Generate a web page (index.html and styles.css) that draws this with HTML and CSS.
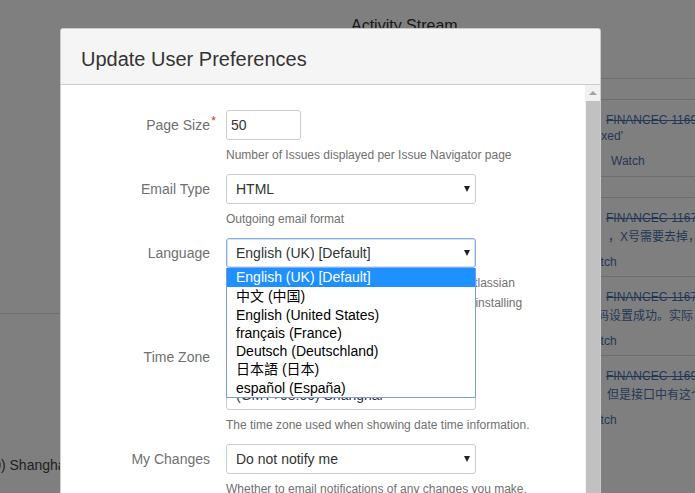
FILE: index.html
```html
<!DOCTYPE html>
<html lang="en">
<head>
<meta charset="utf-8">
<title>Update User Preferences</title>
<link rel="stylesheet" href="styles.css">
</head>
<body>
<div class="page">
  <div class="page-left">
    <div class="left-top"></div>
    <div class="left-tz">(GMT+08:00) Shanghai</div>
  </div>
  <div class="page-right">
    <h3 class="stream-title">Activity Stream</h3>
    <div class="band"></div>
    <div class="act act-first">
      <div class="act-key"><s>FINANCEC-1169</s></div>
      <div class="act-text off-fixed">'Fixed'</div>
      <div class="act-watch off-first">Watch</div>
    </div>
    <div class="band"></div>
    <div class="act">
      <div class="act-key"><s>FINANCEC-1167</s></div>
      <div class="act-text off-2">，X号需要去掉，</div>
      <div class="act-watch off-watch">Watch</div>
    </div>
    <div class="act">
      <div class="act-key"><s>FINANCEC-1167</s></div>
      <div class="act-text off-3">密码设置成功。实际</div>
      <div class="act-watch off-watch">Watch</div>
    </div>
    <div class="act">
      <div class="act-key"><s>FINANCEC-1169</s></div>
      <div class="act-text off-4">但是接口中有这个</div>
      <div class="act-watch off-watch">Watch</div>
    </div>
  </div>
</div>

<div class="blanket"></div>

<section class="dialog">
  <header class="dialog-header">
    <h2 class="dialog-title">Update User Preferences</h2>
  </header>
  <div class="dialog-body">
    <form class="prefs">
      <div class="field">
        <label class="field-label">Page Size<span class="req">*</span></label>
        <div class="field-main">
          <input class="text-input" type="text" value="50">
          <div class="desc">Number of Issues displayed per Issue Navigator page</div>
        </div>
      </div>

      <div class="field">
        <label class="field-label">Email Type</label>
        <div class="field-main">
          <div class="select"><span>HTML</span><span class="caret"></span></div>
          <div class="desc">Outgoing email format</div>
        </div>
      </div>

      <div class="field">
        <label class="field-label">Language</label>
        <div class="field-main">
          <div class="select-wrap">
            <div class="select focused"><span>English (UK) [Default]</span><span class="caret"></span></div>
            <div class="listbox">
              <div class="opt sel tall">English (UK) [Default]</div>
              <div class="opt tall">中文 (中国)</div>
              <div class="opt">English (United States)</div>
              <div class="opt">français (France)</div>
              <div class="opt">Deutsch (Deutschland)</div>
              <div class="opt tall">日本語 (日本)</div>
              <div class="opt">español (España)</div>
            </div>
          </div>
          <div class="desc">If your language is not listed, it may be in the Atlassian<br>Marketplace. Contact your administrator about installing<br>language packs.</div>
        </div>
      </div>

      <div class="field">
        <label class="field-label">Time Zone</label>
        <div class="field-main">
          <div class="stack">
            <div class="select"><span>Asia</span><span class="caret"></span></div>
            <div class="select"><span>(GMT+08:00) Shanghai</span><span class="caret"></span></div>
          </div>
          <div class="desc">The time zone used when showing date time information.</div>
        </div>
      </div>

      <div class="field">
        <label class="field-label">My Changes</label>
        <div class="field-main">
          <div class="select"><span>Do not notify me</span><span class="caret"></span></div>
          <div class="desc">Whether to email notifications of any changes you make.</div>
        </div>
      </div>
    </form>
    <div class="scrollbar">
      <div class="sb-up"></div>
      <div class="sb-thumb"></div>
    </div>
  </div>
</section>
</body>
</html>
```

FILE: styles.css
```css
* {
  box-sizing: border-box;
}

html,
body {
  margin: 0;
  padding: 0;
}

body {
  width: 695px;
  height: 493px;
  overflow: hidden;
  background: #ffffff;
  font-family: "Liberation Sans", Arial, "Noto Sans CJK SC", sans-serif;
  color: #333333;
}

/* ---------- background page ---------- */
.page {
  display: grid;
  grid-template-columns: 345px 350px;
  height: 493px;
}

.page-left {
  overflow: hidden;
}

.left-top {
  height: 314px;
  border-bottom: 1px solid #dddddd;
}

.left-tz {
  margin: 141px 0 0 -78px;
  font-size: 14px;
  line-height: 20px;
  white-space: nowrap;
  color: #444444;
}

.page-right {
  overflow: hidden;
  white-space: nowrap;
}

.stream-title {
  margin: 0;
  padding: 16px 0 0 6px;
  height: 78px;
  font-size: 16px;
  line-height: 20px;
  font-weight: normal;
  color: #333333;
}

.band {
  height: 21px;
  border-top: 1px solid #dddddd;
}

.act {
  border-top: 1px solid #dddddd;
  padding: 10px 0 4px 261px;
  font-size: 12px;
  color: #4a6fae;
}

.act-first {
  padding-bottom: 5px;
}

.act-key {
  line-height: 20px;
}

.act-text {
  line-height: 18px;
}

.act-watch {
  line-height: 20px;
  margin-top: 6px;
}

.off-fixed {
  margin-left: -17px;
  margin-top: -3px;
  margin-bottom: 3px;
}

.off-first {
  margin-left: 5px;
}

.off-2 {
  margin-left: 2px;
}

.off-3 {
  margin-left: -21px;
}

.off-4 {
  margin-left: 1px;
}

.off-watch {
  margin-left: -23px;
}

/* ---------- blanket + dialog ---------- */
.blanket {
  position: fixed;
  inset: 0;
  background: rgba(0, 0, 0, 0.5);
}

.dialog {
  position: fixed;
  left: 60px;
  top: 28px;
  width: 541px;
  height: 540px;
  background: #ffffff;
  border: 1px solid #cccccc;
  border-radius: 3px;
  overflow: hidden;
  display: flex;
  flex-direction: column;
}

.dialog-header {
  flex: none;
  height: 56px;
  background: #f5f5f5;
  border-bottom: 1px solid #cccccc;
  padding: 19px 20px 0;
}

.dialog-title {
  margin: 0;
  font-size: 20px;
  line-height: 23px;
  font-weight: normal;
  color: #333333;
}

.dialog-body {
  flex: 1;
  min-height: 0;
  display: flex;
}

.prefs {
  flex: 1;
  margin: 0;
  padding: 20px 20px 0;
  overflow: hidden;
}

.field {
  display: grid;
  grid-template-columns: 129px 1fr;
  column-gap: 16px;
  padding: 4px 0;
  margin-top: 1px;
}

.field-label {
  text-align: right;
  font-size: 14px;
  line-height: 20px;
  padding-top: 5px;
  color: #707070;
  white-space: nowrap;
}

.req {
  display: inline-block;
  width: 7px;
  margin-right: -7px;
  padding-left: 1px;
  vertical-align: top;
  font-size: 13px;
  line-height: 12px;
  text-align: left;
  color: #d04437;
}

.field-main {
  min-width: 0;
}

.text-input {
  display: block;
  width: 75px;
  height: 30px;
  margin: 0;
  border: 1px solid #cccccc;
  border-radius: 3px;
  padding: 0 4px;
  font-family: inherit;
  font-size: 14px;
  line-height: 28px;
  color: #333333;
  background: #ffffff;
  outline: none;
}

.select {
  width: 250px;
  height: 30px;
  border: 1px solid #cccccc;
  border-radius: 3px;
  padding: 0 5px 0 9px;
  font-size: 14px;
  line-height: 28px;
  color: #333333;
  background: #ffffff;
  display: flex;
  justify-content: space-between;
  align-items: center;
  white-space: nowrap;
}

.select.focused {
  border-color: #88aeea;
  box-shadow: inset 0 0 0 1px #d3e1f8;
}

.caret {
  flex: none;
  width: 0;
  height: 0;
  border-left: 3.5px solid transparent;
  border-right: 3.5px solid transparent;
  border-top: 6px solid #222222;
}

.select-wrap {
  position: relative;
  width: 250px;
}

.listbox {
  position: absolute;
  top: 30px;
  left: 0;
  width: 250px;
  background: #ffffff;
  border: 1px solid #7b9cd5;
  border-top: 0;
  z-index: 2;
}

.opt {
  height: 18px;
  line-height: 18px;
  padding-left: 9px;
  font-size: 14px;
  color: #000000;
  white-space: nowrap;
  overflow: hidden;
}

.opt.tall {
  height: 19px;
  line-height: 19px;
}

.opt.sel {
  background: #1e90ff;
  color: #ffffff;
}

.stack {
  display: flex;
  flex-direction: column;
  gap: 8px;
}

.desc {
  margin-top: 5px;
  font-size: 12px;
  line-height: 20px;
  color: #707070;
  white-space: nowrap;
}

/* ---------- fake scrollbar ---------- */
.scrollbar {
  flex: none;
  width: 15px;
  background: #f1f1f1;
  display: flex;
  flex-direction: column;
}

.sb-up {
  flex: none;
  height: 16px;
  display: flex;
  align-items: center;
  justify-content: center;
}

.sb-up::before {
  content: "";
  width: 0;
  height: 0;
  border-left: 4px solid transparent;
  border-right: 4px solid transparent;
  border-bottom: 4px solid #a3a3a3;
}

.sb-thumb {
  flex: 1;
  margin-left: 1px;
  background: #c1c1c1;
}
```
